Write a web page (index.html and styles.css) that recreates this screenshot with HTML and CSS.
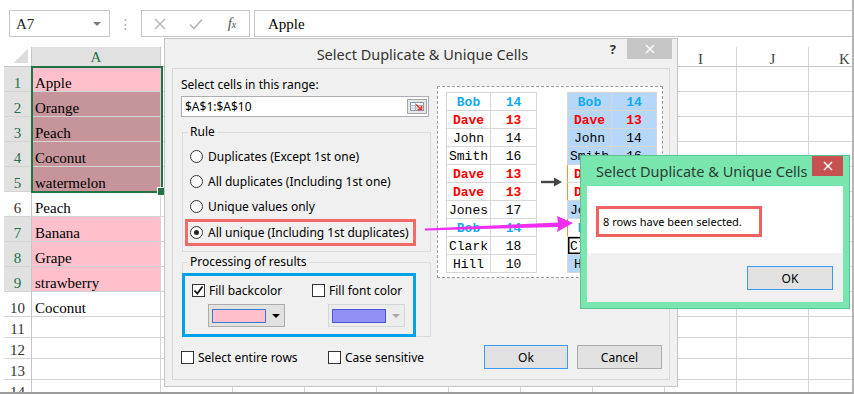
FILE: index.html
```html
<!DOCTYPE html>
<html lang="en">
<head>
  <meta charset="UTF-8" />
  <title>Select Duplicate &amp; Unique Cells</title>
  <link rel="stylesheet" href="styles.css">
</head>
<body>
  <div class="screen">
    <div class="formula-bar">
      <div class="name-box"><span>A7</span><span class="caret"></span></div>
      <div class="bar-dots">⋮</div>
      <div class="fx-buttons">
        <svg width="12" height="12" viewBox="0 0 12 12"><path d="M1 1L11 11M11 1L1 11" stroke="#b4b4b4" stroke-width="1.4"/></svg>
        <svg width="14" height="12" viewBox="0 0 14 12"><path d="M1 6.5L5 10.5L13 1.5" stroke="#b4b4b4" stroke-width="1.6" fill="none"/></svg>
        <span class="fx-label">f<small>x</small></span>
      </div>
      <div class="formula-input">Apple</div>
    </div>

    <div class="sheet">
      <div class="corner"><span></span></div>
      <div class="col-head picked">A</div>
      <!-- B to H sit behind the dialog -->
      <div class="col-heads">
        <span></span><span></span><span></span><span></span><span></span>
        <span></span><span></span><span>I</span><span>J</span><span>K</span>
      </div>

      <div class="row-head picked">1</div><div class="cell pink">Apple</div><div class="rest"></div>
      <div class="row-head picked">2</div><div class="cell dim">Orange</div><div class="rest"></div>
      <div class="row-head picked">3</div><div class="cell dim">Peach</div><div class="rest"></div>
      <div class="row-head picked">4</div><div class="cell dim">Coconut</div><div class="rest"></div>
      <div class="row-head picked">5</div><div class="cell dim">watermelon</div><div class="rest"></div>
      <div class="row-head">6</div><div class="cell">Peach</div><div class="rest"></div>
      <div class="row-head picked">7</div><div class="cell pink">Banana</div><div class="rest"></div>
      <div class="row-head picked">8</div><div class="cell pink">Grape</div><div class="rest"></div>
      <div class="row-head picked">9</div><div class="cell pink">strawberry</div><div class="rest"></div>
      <div class="row-head">10</div><div class="cell">Coconut</div><div class="rest"></div>
      <div class="row-head">11</div><div class="cell"></div><div class="rest"></div>
      <div class="row-head">12</div><div class="cell"></div><div class="rest"></div>
      <div class="row-head">13</div><div class="cell"></div><div class="rest"></div>
      <div class="row-head">14</div><div class="cell"></div><div class="rest"></div>
    </div>
    <div class="selection"></div>

    <div class="dialog">
      <div class="dialog-title">
        <span class="dialog-caption">Select Duplicate &amp; Unique Cells</span>
        <span class="dialog-help">?</span>
        <span class="dialog-close">
          <svg width="10" height="10" viewBox="0 0 10 10"><path d="M1 1L9 9M9 1L1 9" stroke="#fff" stroke-width="1.3"/></svg>
        </span>
      </div>

      <div class="dialog-panel">
        <div class="dialog-main">
          <div class="options">
            <div class="field-label">Select cells in this range:</div>
            <div class="range-input">
              <span>$A$1:$A$10</span>
              <svg class="range-btn" width="20" height="15" viewBox="0 0 20 15">
                <rect x="0.5" y="0.5" width="19" height="14" fill="#e6e6e6" stroke="#a6a6a6"/>
                <rect x="3.5" y="3.5" width="13" height="8" fill="#fff" stroke="#8495ad"/>
                <path d="M3.5 6.5h13M3.5 9h13M8.5 3.5v8" stroke="#a9b6c8"/>
                <path d="M9 5.5l5 4.5M14.5 6.5v4h-4" stroke="#e2412e" stroke-width="1.6" fill="none"/>
              </svg>
            </div>

            <fieldset class="group rule-group">
              <legend>Rule</legend>
              <label class="option"><span class="radio"></span>Duplicates (Except 1st one)</label>
              <label class="option"><span class="radio"></span>All duplicates (Including 1st one)</label>
              <label class="option"><span class="radio"></span>Unique values only</label>
              <label class="option picked"><span class="radio on"></span>All unique (Including 1st duplicates)</label>
            </fieldset>

            <fieldset class="group result-group">
              <legend>Processing of results</legend>
              <div class="fill-box">
                <div class="fill-col">
                  <label class="check-row">
                    <span class="check"><svg width="11" height="11" viewBox="0 0 11 11"><path d="M1.5 5.5L4.3 8.5L9.5 1.5" stroke="#111" stroke-width="1.8" fill="none"/></svg></span>
                    Fill backcolor
                  </label>
                  <div class="color-pick"><span class="swatch"></span><span class="drop"></span></div>
                </div>
                <div class="fill-col">
                  <label class="check-row"><span class="check"></span>Fill font color</label>
                  <div class="color-pick off"><span class="swatch"></span><span class="drop"></span></div>
                </div>
              </div>
            </fieldset>
          </div>

          <div class="preview">
            <table class="demo">
              <colgroup><col class="c-name"><col class="c-num"></colgroup>
              <tr class="blue"><td>Bob</td><td>14</td></tr>
              <tr class="red"><td>Dave</td><td>13</td></tr>
              <tr><td>John</td><td>14</td></tr>
              <tr><td>Smith</td><td>16</td></tr>
              <tr class="red"><td>Dave</td><td>13</td></tr>
              <tr class="red"><td>Dave</td><td>13</td></tr>
              <tr><td>Jones</td><td>17</td></tr>
              <tr class="blue"><td>Bob</td><td>14</td></tr>
              <tr><td>Clark</td><td>18</td></tr>
              <tr><td>Hill</td><td>10</td></tr>
            </table>
            <svg class="demo-arrow" width="22" height="10" viewBox="0 0 22 10"><path d="M0 5H15" stroke="#444" stroke-width="2.4"/><path d="M13 0.5L21 5L13 9.5Z" fill="#444"/></svg>
            <table class="demo after">
              <colgroup><col class="c-name"><col class="c-num"></colgroup>
              <tr class="blue sel"><td>Bob</td><td>14</td></tr>
              <tr class="red sel"><td>Dave</td><td>13</td></tr>
              <tr class="sel"><td>John</td><td>14</td></tr>
              <tr class="sel"><td>Smith</td><td>16</td></tr>
              <tr class="red edge"><td>Dave</td><td>13</td></tr>
              <tr class="red edge"><td>Dave</td><td>13</td></tr>
              <tr class="sel"><td>Jones</td><td>17</td></tr>
              <tr class="blue edge"><td>Bob</td><td>14</td></tr>
              <tr class="sel active"><td>Clark</td><td>18</td></tr>
              <tr class="sel"><td>Hill</td><td>10</td></tr>
            </table>
          </div>
        </div>

        <div class="dialog-foot">
          <label class="check-row wide"><span class="check"></span>Select entire rows</label>
          <label class="check-row"><span class="check"></span>Case sensitive</label>
          <button class="btn btn-default">Ok</button>
          <button class="btn">Cancel</button>
        </div>
      </div>
    </div>

    <svg class="pointer" width="160" height="30" viewBox="0 0 160 30">
      <polygon points="5,18.6 138,12.6 137,6 153,13 137,22 138,17 5,20.4" fill="#f02ef0"/>
    </svg>

    <div class="popup">
      <div class="popup-title">
        <span class="popup-caption">Select Duplicate &amp; Unique Cells</span>
        <span class="popup-close">
          <svg width="10" height="10" viewBox="0 0 10 10"><path d="M1 1L9 9M9 1L1 9" stroke="#fff" stroke-width="1.5"/></svg>
        </span>
      </div>
      <div class="popup-body">
        <div class="popup-msg">8 rows have been selected.</div>
      </div>
      <div class="popup-foot">
        <button class="btn btn-default popup-ok">OK</button>
      </div>
    </div>
  </div>
</body>
</html>
```

FILE: styles.css
```css
* {
  box-sizing: border-box;
  margin: 0;
  padding: 0;
}

body {
  width: 854px;
  height: 394px;
  overflow: hidden;
  background: #fff;
  font-family: "Liberation Serif", serif;
  color: #000;
}

.screen {
  position: relative;
  width: 854px;
  height: 394px;
  overflow: hidden;
  border-right: 2px solid #b4b4b4;
  border-bottom: 2px solid #9c9c9c;
}

/* formula bar */

.formula-bar {
  display: flex;
  height: 37px;
  padding: 10px 0 0 9px;
}

.name-box {
  width: 101px;
  border: 1px solid #c6c6c6;
  display: flex;
  align-items: center;
  padding: 1px 8px 0 6px;
  font-size: 15px;
  color: #222;
}

.caret {
  margin-left: auto;
  border-left: 4px solid transparent;
  border-right: 4px solid transparent;
  border-top: 4px solid #7a7a7a;
}

.bar-dots {
  width: 31px;
  display: flex;
  align-items: center;
  justify-content: center;
  font-family: "DejaVu Sans", sans-serif;
  font-size: 14px;
  color: #a8a8a8;
}

.fx-buttons {
  width: 109px;
  border: 1px solid #c6c6c6;
  display: grid;
  grid-template-columns: repeat(3, 36px);
  align-items: center;
  justify-items: center;
}

.fx-label {
  font-style: italic;
  font-size: 15px;
  color: #555;
}

.fx-label small {
  font-size: 10px;
}

.formula-input {
  flex: 1;
  margin-left: 4px;
  border: 1px solid #c6c6c6;
  border-right: none;
  padding: 1px 0 0 13px;
  font-size: 15px;
  line-height: 24px;
}

/* sheet */

.sheet {
  display: grid;
  grid-template-columns: 28px 129px 720px;
  grid-template-rows: 20px repeat(10, 25px) repeat(4, 21px);
  margin: 10px 0 0 4px;
  font-size: 15px;
}

.corner {
  border-right: 1px solid #c6c6c6;
  border-bottom: 1px solid #c6c6c6;
  display: flex;
  justify-content: flex-end;
  align-items: flex-end;
  padding: 0 3px 3px 0;
}

.corner span {
  width: 15px;
  height: 15px;
  background: linear-gradient(to bottom right, transparent 50%, #dcdcdc 50%);
}

.col-head {
  display: flex;
  align-items: center;
  justify-content: center;
  padding-top: 2px;
  border-right: 1px solid #c6c6c6;
  border-bottom: 1px solid #c6c6c6;
  color: #444;
}

.col-head.picked {
  background: #e1e1e1;
  color: #217346;
}

.col-heads {
  display: flex;
  border-bottom: 1px solid #c6c6c6;
}

.col-heads span {
  flex: 0 0 72px;
  text-align: center;
  line-height: 20px;
  padding-top: 2px;
  border-right: 1px solid #d4d4d4;
  color: #444;
}

.row-head {
  display: flex;
  align-items: flex-end;
  justify-content: center;
  line-height: 16px;
  border-right: 1px solid #c6c6c6;
  border-bottom: 1px solid #d4d4d4;
  color: #333;
}

.row-head.picked {
  background: #e1e1e1;
  color: #217346;
}

.cell {
  display: flex;
  align-items: flex-end;
  padding-left: 3px;
  line-height: 16px;
  border-right: 1px solid #d4d4d4;
  border-bottom: 1px solid #d4d4d4;
}

.cell.pink {
  background: #ffc0cb;
}

.cell.dim {
  background: #c6959b;
}

.rest {
  border-bottom: 1px solid #d4d4d4;
  background: repeating-linear-gradient(to right, transparent 0 71px, #d4d4d4 71px 72px);
}

.selection {
  position: absolute;
  left: 31px;
  top: 66px;
  width: 132px;
  height: 127px;
  border: 2px solid #217346;
}

.selection::after {
  content: "";
  position: absolute;
  right: -5px;
  bottom: -5px;
  width: 7px;
  height: 7px;
  background: #217346;
  border: 1px solid #fff;
}

/* main dialog */

.dialog {
  position: absolute;
  left: 164px;
  top: 38px;
  width: 514px;
  height: 349px;
  background: #f0f0f0;
  border: 1px solid #c4c4c4;
  font-family: "Noto Sans", sans-serif;
  font-size: 12px;
  color: #000;
}

.dialog-title {
  display: flex;
  align-items: flex-start;
  height: 26px;
}

.dialog-caption {
  flex: 1;
  text-align: center;
  padding: 6px 0 0 70px;
  font-size: 14.5px;
  line-height: 18px;
  white-space: nowrap;
  color: #333;
}

.dialog-help {
  margin: 4px 11px 0 0;
  font-weight: bold;
  font-size: 13px;
  line-height: 13px;
  color: #333;
}

.dialog-close {
  width: 45px;
  height: 20px;
  margin-right: 5px;
  background: #c6c6c6;
  display: flex;
  align-items: center;
  justify-content: center;
}

.dialog-panel {
  margin: 3px 7px 0;
  height: 312px;
  border: 1px solid #d9d9d9;
  padding: 8px 6px 0 8px;
}

.dialog-main {
  display: flex;
  align-items: flex-start;
}

.options {
  width: 250px;
}

.field-label {
  line-height: 16px;
}

.range-input {
  margin-top: 3px;
  width: 248px;
  height: 21px;
  border: 1px solid #abadb3;
  background: #fff;
  display: flex;
  align-items: center;
  padding: 0 1px 0 3px;
}

.range-btn {
  margin-left: auto;
}

.group {
  border: 1px solid #dcdcdc;
  margin-left: 1px;
  width: 249px;
  min-width: 0;
}

.group legend {
  margin-left: 5px;
  padding: 0 2px;
  line-height: 16px;
}

.rule-group {
  margin-top: 7px;
  padding: 4px 0 5px;
}

.option {
  display: flex;
  align-items: center;
  gap: 5px;
  height: 25px;
  padding-left: 7px;
}

.option.picked {
  border: 3px solid #f26a68;
  margin-left: 2px;
  width: 231px;
  height: 27px;
  padding-left: 2px;
}

.radio {
  width: 13px;
  height: 13px;
  border: 1px solid #333;
  border-radius: 50%;
  background: #fff;
  display: flex;
  align-items: center;
  justify-content: center;
}

.radio.on::after {
  content: "";
  width: 5px;
  height: 5px;
  border-radius: 50%;
  background: #222;
}

.result-group {
  margin-top: 2px;
}

.fill-box {
  margin: 3px 0 -1px -1px;
  width: 234px;
  height: 64px;
  border: 3px solid #00a2e8;
  display: grid;
  grid-template-columns: 120px 1fr;
  padding: 6px 0 0 7px;
}

.fill-col {
  display: flex;
  flex-direction: column;
}

.check-row {
  display: flex;
  align-items: center;
  gap: 4px;
  height: 16px;
}

.check {
  width: 13px;
  height: 13px;
  border: 1px solid #333;
  background: #fff;
  display: flex;
  align-items: center;
  justify-content: center;
}

.color-pick {
  margin: 6px 0 0 16px;
  width: 77px;
  height: 23px;
  border: 1px solid #acacac;
  background: #e1e1e1;
  display: flex;
  align-items: center;
  padding-left: 3px;
}

.swatch {
  width: 54px;
  height: 14px;
  border: 1px solid #3d7bcf;
  background: #ffc0cb;
}

.drop {
  margin-left: 6px;
  border-left: 4px solid transparent;
  border-right: 4px solid transparent;
  border-top: 4px solid #000;
}

.color-pick.off {
  background: #ececec;
  border-color: #d6d6d6;
}

.color-pick.off .swatch {
  background: #9191f3;
  border-color: #4d55d6;
}

.color-pick.off .drop {
  border-top-color: #a6a6a6;
}

.preview {
  margin: 9px 0 0 6px;
  width: 226px;
  height: 192px;
  border: 1px dashed #9a9a9a;
  background: #fff;
  display: flex;
  align-items: flex-start;
  padding: 5px 0 0 8px;
}

.demo {
  border-collapse: collapse;
  font-family: "Liberation Mono", monospace;
  font-size: 13px;
  border: 1px solid #c4c4c4;
}

.demo td {
  height: 15px;
  padding: 2px 0 0;
  text-align: center;
  line-height: 15px;
  border: 1px solid #d6d6d6;
}

.demo .c-name {
  width: 44px;
}

.demo .c-num {
  width: 46px;
}

.demo .blue td {
  color: #0eaaee;
  font-weight: bold;
}

.demo .red td {
  color: #ff0000;
  font-weight: bold;
}

.demo-arrow {
  margin: 85px 4px 0 4px;
}

.after .c-num {
  width: 45px;
}

.after .sel td {
  background: #b7d7f8;
}

.after .edge td:first-child {
  border-left: 1px solid #e29a3c;
}

.after .active td:first-child {
  background: #fff;
  box-shadow: inset 0 0 0 1.5px #000;
}

.dialog-foot {
  display: flex;
  align-items: center;
  height: 24px;
  margin-top: 8px;
}

.check-row.wide {
  width: 147px;
}

.btn {
  width: 84px;
  height: 24px;
  border: 1px solid #adadad;
  background: #e1e1e1;
  font-family: "Noto Sans", sans-serif;
  font-size: 12px;
  color: #000;
}

.btn-default {
  border-color: #3c9af2;
  margin-left: auto;
}

.btn-default + .btn {
  width: 85px;
  margin: 0 1px 0 9px;
}

/* magenta pointer */

.pointer {
  position: absolute;
  left: 420px;
  top: 210px;
}

/* result message */

.popup {
  position: absolute;
  left: 580px;
  top: 155px;
  width: 270px;
  height: 154px;
  background: #78e6ae;
  border: 1px solid #5dc28f;
  padding: 0 6px 6px;
  display: flex;
  flex-direction: column;
  font-family: "Noto Sans", sans-serif;
  font-size: 12px;
}

.popup-title {
  display: flex;
  align-items: flex-start;
  height: 30px;
  flex: none;
}

.popup-caption {
  padding: 6px 0 0 9px;
  font-size: 14.5px;
  line-height: 18px;
  white-space: nowrap;
  color: #2e3d36;
}

.popup-close {
  margin-left: auto;
  width: 31px;
  height: 20px;
  background: #c75050;
  display: flex;
  align-items: center;
  justify-content: center;
}

.popup-body {
  height: 67px;
  flex: none;
  background: #fff;
  padding: 20px 0 0 9px;
}

.popup-msg {
  width: 166px;
  height: 31px;
  border: 3px solid #f06262;
  padding-left: 4px;
  display: flex;
  align-items: center;
  font-size: 11px;
}

.popup-foot {
  flex: 1;
  background: #f0f0f0;
  display: flex;
  justify-content: flex-end;
  padding: 13px 10px 0 0;
}

.popup-ok {
  width: 86px;
  margin-left: 0;
}
```
